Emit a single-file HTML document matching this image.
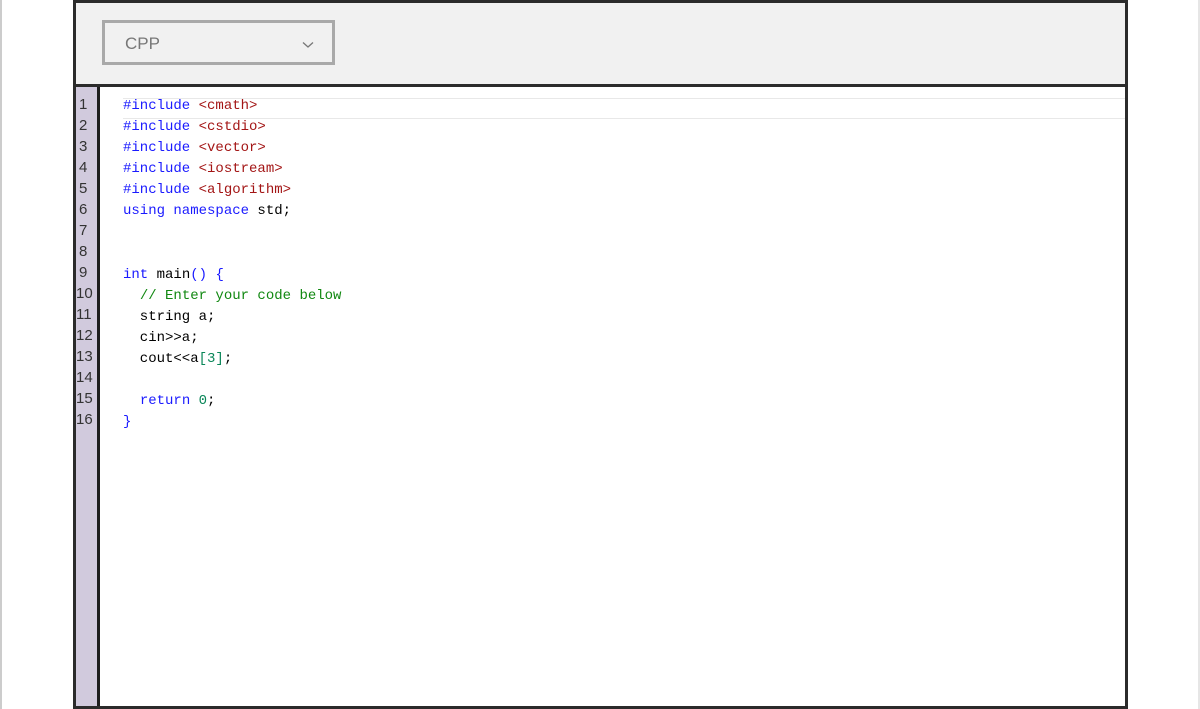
<!DOCTYPE html>
<html><head><style>
body{margin:0;width:1200px;height:709px;background:#fff;position:relative;overflow:hidden;font-family:"Liberation Sans",sans-serif}
.edgeL{position:absolute;left:0;top:0;width:2px;height:709px;background:#ccc}
.edgeR{position:absolute;left:1198px;top:0;width:2px;height:709px;background:#e6e6e6}
.box{position:absolute;left:73px;top:0;width:1049px;height:703px;border:3px solid #2b2b2b;background:#fff}
.hdr{position:absolute;left:0;top:0;width:1049px;background:#f1f1f1;border-bottom:3px solid #2b2b2b;box-sizing:border-box;height:84px}
.sel{position:absolute;left:26px;top:17px;border:3px solid #a9a9a9;box-sizing:border-box;background:#f1f1f1;width:233px;height:45px}
.sel span{position:absolute;left:20px;top:11px;font-size:17px;color:#777}
.sel svg{position:absolute;right:18px;top:18px}
.gut{position:absolute;left:0;top:84px;width:21px;height:619px;background:#d1cadd;border-right:3px solid #1e1e1e}
.ln{position:absolute;left:3px;font-size:15px;color:#333;font-family:"Liberation Sans",sans-serif}
.code{position:absolute;left:47px;top:93px;font-family:"Liberation Mono",monospace;font-size:14px;line-height:21.1px;white-space:pre;color:#000}
.cur{position:absolute;left:47px;top:95px;width:1002px;height:19px;border:1px solid #e8e8e8;border-left:none;border-right:none}
.k{color:#1a1aff}.s{color:#a31515}.c{color:#118811}.n{color:#098658}
</style></head><body>
<div class="edgeL"></div><div class="edgeR"></div>
<div class="box">
<div class="hdr"><div class="sel"><span>CPP</span><svg width="12" height="8" viewBox="0 0 12 8"><path d="M1 1.5L6 6L11 1.5" stroke="#777" stroke-width="1.3" fill="none"/></svg></div></div>
<div class="gut">
<div class="ln" style="top:9px">1</div><div class="ln" style="top:30px">2</div><div class="ln" style="top:51px">3</div><div class="ln" style="top:72px">4</div><div class="ln" style="top:93px">5</div><div class="ln" style="top:114px">6</div><div class="ln" style="top:135px">7</div><div class="ln" style="top:156px">8</div><div class="ln" style="top:177px">9</div><div class="ln" style="top:198px;left:0">10</div><div class="ln" style="top:219px;left:0">11</div><div class="ln" style="top:240px;left:0">12</div><div class="ln" style="top:261px;left:0">13</div><div class="ln" style="top:282px;left:0">14</div><div class="ln" style="top:303px;left:0">15</div><div class="ln" style="top:324px;left:0">16</div>
</div>
<div class="cur"></div>
<div class="code"><span class="k">#include</span> <span class="s">&lt;cmath&gt;</span>
<span class="k">#include</span> <span class="s">&lt;cstdio&gt;</span>
<span class="k">#include</span> <span class="s">&lt;vector&gt;</span>
<span class="k">#include</span> <span class="s">&lt;iostream&gt;</span>
<span class="k">#include</span> <span class="s">&lt;algorithm&gt;</span>
<span class="k">using namespace</span> std;


<span class="k">int</span> main<span class="k">() {</span>
  <span class="c">// Enter your code below</span>
  string a;
  cin&gt;&gt;a;
  cout&lt;&lt;a<span class="n">[3]</span>;

  <span class="k">return</span> <span class="n">0</span>;
<span class="k">}</span></div>
</div>
</body></html>
